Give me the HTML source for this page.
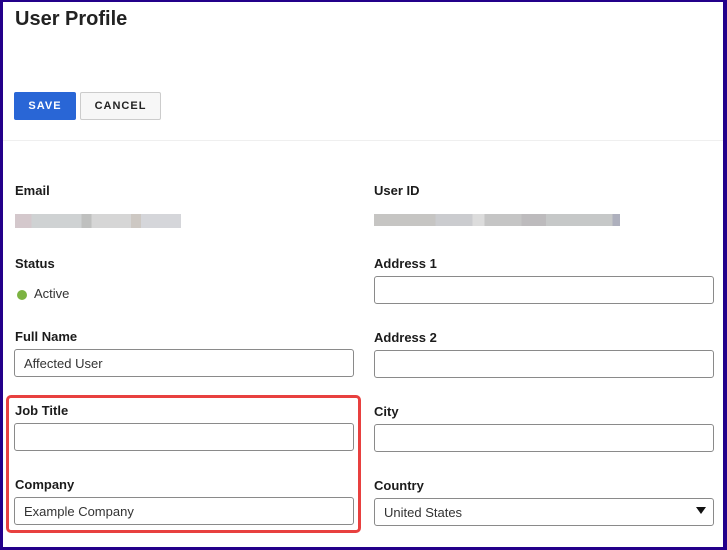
<!DOCTYPE html>
<html><head><meta charset="utf-8"><style>
*{margin:0;padding:0;box-sizing:border-box}
html,body{width:727px;height:550px;overflow:hidden;background:#fff}
body{position:relative;font-family:"Liberation Sans",Arial,sans-serif;color:#1a1a1a}
.frame{position:absolute;left:0;top:0;width:727px;height:550px;border:solid #23008a;border-width:2px 4px 3px 3px}
.a{position:absolute}
h1{position:absolute;left:15px;top:8px;font-size:20px;font-weight:bold;font-family:"Liberation Sans",sans-serif;color:#222}
.btn{position:absolute;top:92px;height:28px;font-size:11px;font-weight:bold;letter-spacing:1px;display:flex;align-items:center;justify-content:center;border-radius:2px}
.lbl{position:absolute;font-size:13px;font-weight:bold;color:#1b1b1b}
.in{position:absolute;height:28px;border:1px solid #8a8a8a;border-radius:3px;font-size:13px;color:#333;padding-left:9px;display:flex;align-items:center;background:#fff}
.L{left:14px;width:340px}.R{left:374px;width:340px}
</style></head><body>
<h1>User Profile</h1>
<div class="btn" style="left:14px;width:62px;background:#2966d6;color:#fff">SAVE</div>
<div class="btn" style="left:80px;width:81px;background:#f7f7f7;border:1px solid #ccc;color:#222">CANCEL</div>
<div class="a" style="left:3px;right:4px;top:140px;height:1px;background:#efefef"></div>

<div class="lbl" style="left:15px;top:183px">Email</div>
<div class="a" style="left:15px;top:214px;width:166px;height:14px;background:linear-gradient(90deg,#d4c8cc 0 10%,#cfd2d3 10% 40%,#bfc0bf 40% 46%,#d6d6d6 46% 70%,#cdc8c3 70% 76%,#d5d6da 76%)"></div>
<div class="lbl" style="left:374px;top:183px">User ID</div>
<div class="a" style="left:374px;top:214px;width:246px;height:12px;background:linear-gradient(90deg,#c6c5c3 0 25%,#cbcccf 25% 40%,#dcdcdc 40% 45%,#c5c5c5 45% 60%,#bdbbbd 60% 70%,#c6c8c8 70% 97%,#aeb0bd 97%)"></div>

<div class="lbl" style="left:15px;top:256px">Status</div>
<div class="a" style="left:17px;top:290px;width:10px;height:10px;border-radius:50%;background:#7cb342"></div>
<div class="a" style="left:34px;top:286px;font-size:13px;color:#333">Active</div>
<div class="lbl" style="left:374px;top:256px">Address 1</div>
<div class="in R" style="top:276px"></div>

<div class="lbl" style="left:15px;top:329px">Full Name</div>
<div class="in L" style="top:349px">Affected User</div>
<div class="lbl" style="left:374px;top:330px">Address 2</div>
<div class="in R" style="top:350px"></div>

<div class="lbl" style="left:15px;top:403px">Job Title</div>
<div class="in L" style="top:423px"></div>
<div class="lbl" style="left:374px;top:404px">City</div>
<div class="in R" style="top:424px"></div>

<div class="lbl" style="left:15px;top:477px">Company</div>
<div class="in L" style="top:497px">Example Company</div>
<div class="lbl" style="left:374px;top:478px">Country</div>
<div class="in R" style="top:498px">United States<span style="position:absolute;right:7px;top:8px;width:0;height:0;border-left:5px solid transparent;border-right:5px solid transparent;border-top:7px solid #111"></span></div>

<div class="a" style="left:6px;top:395px;width:355px;height:138px;border:3px solid #e8403f;border-radius:5px"></div>
<div class="frame"></div>
</body></html>
